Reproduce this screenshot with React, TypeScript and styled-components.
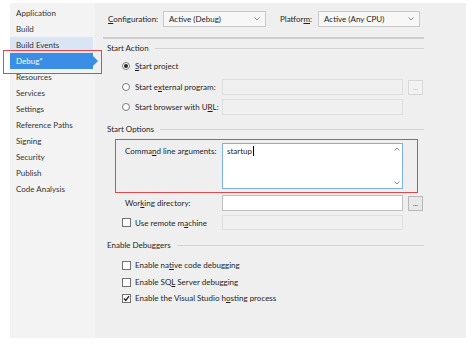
import React from 'react';
import styled, { createGlobalStyle } from 'styled-components';

const GlobalStyle = createGlobalStyle`
  html, body {
    margin: 0;
    padding: 0;
    background: #ffffff;
  }
  body {
    font-family: Lato, "Open Sans", Arial, sans-serif;
    font-size: 8px;
    color: #1e1e1e;
  }
`;

const Panel = styled.div`
  position: relative;
  display: flex;
  margin: 3px 0 0 10px;
  width: 456px;
  height: 335px;
  background: #efefef;
`;

const Sidebar = styled.nav`
  width: 85px;
  padding-top: 2px;
  background: #f3f3f3;
`;

const NavItem = styled.div<{ $state?: 'hover' | 'active' }>`
  position: relative;
  height: 16px;
  line-height: 16px;
  padding-left: 6px;
  margin-right: 2px;
  white-space: nowrap;
  color: ${p => (p.$state === 'active' ? '#ffffff' : '#333333')};
  background: ${p =>
    p.$state === 'active' ? '#3b8ee6' : p.$state === 'hover' ? '#d9e5f4' : 'transparent'};

  ${p =>
    p.$state === 'active' &&
    `
    &::after {
      content: '';
      position: absolute;
      right: -5px;
      top: 3px;
      border-left: 5px solid #3b8ee6;
      border-top: 5px solid transparent;
      border-bottom: 5px solid transparent;
    }
  `}
`;

const Highlight = styled.div`
  position: absolute;
  left: -7px;
  top: 47px;
  width: 97px;
  height: 22px;
  border: 1px solid #e0484c;
  pointer-events: none;
`;

const Main = styled.main`
  flex: 1;
  padding: 8px 0 0 8px;
`;

const Content = styled.div`
  width: 321px;
  display: flex;
  flex-direction: column;
`;

const TopRow = styled.div`
  display: flex;
  align-items: center;
  height: 16px;
  padding-left: 5px;
`;

const TopLabel = styled.span<{ $w: number }>`
  width: ${p => p.$w}px;
  white-space: nowrap;
`;

const Select = styled.div<{ $w: number; $gap?: number }>`
  box-sizing: border-box;
  display: flex;
  align-items: center;
  justify-content: space-between;
  width: ${p => p.$w}px;
  height: 16px;
  margin-right: ${p => p.$gap ?? 0}px;
  padding: 0 5px;
  white-space: nowrap;
  background: #f7f7f7;
  border: 1px solid #c9c9c9;
`;

const Separator = styled.div`
  margin-top: 10px;
  height: 2px;
  background: #cdcdcd;
`;

const Section = styled.div<{ $mt: number }>`
  display: flex;
  align-items: center;
  height: 12px;
  margin-top: ${p => p.$mt}px;
  padding-left: 4px;
  white-space: nowrap;

  &::after {
    content: '';
    flex: 1;
    height: 1px;
    margin-left: 6px;
    background: #d3d3d3;
  }
`;

const Row = styled.div<{ $mt: number; $h?: number; $indent?: number }>`
  display: flex;
  align-items: center;
  height: ${p => p.$h ?? 16}px;
  margin-top: ${p => p.$mt}px;
  padding-left: ${p => p.$indent ?? 19}px;
`;

const Label = styled.span<{ $w?: number; $pt?: number }>`
  display: block;
  width: ${p => (p.$w ? `${p.$w}px` : 'auto')};
  padding-top: ${p => p.$pt ?? 0}px;
  flex-shrink: 0;
  white-space: nowrap;
`;

const Radio = styled.span<{ $on?: boolean }>`
  position: relative;
  box-sizing: border-box;
  width: 8px;
  height: 8px;
  margin-right: 5px;
  border-radius: 50%;
  border: 1px solid #7a7a7a;
  background: #ffffff;

  ${p =>
    p.$on &&
    `
    &::after {
      content: '';
      position: absolute;
      left: 1px;
      top: 1px;
      width: 4px;
      height: 4px;
      border-radius: 50%;
      background: #262626;
    }
  `}
`;

const Check = styled.span`
  box-sizing: border-box;
  display: flex;
  align-items: center;
  justify-content: center;
  width: 9px;
  height: 9px;
  margin-right: 4px;
  border: 1px solid #707070;
  background: #ffffff;
`;

const Input = styled.div<{ $disabled?: boolean; $h?: number }>`
  box-sizing: border-box;
  width: 181px;
  height: ${p => p.$h ?? 16}px;
  background: ${p => (p.$disabled ? '#f0f0f0' : '#ffffff')};
  border: 1px solid ${p => (p.$disabled ? '#dedede' : '#bfbfbf')};
`;

const Browse = styled.div<{ $disabled?: boolean }>`
  box-sizing: border-box;
  display: flex;
  align-items: center;
  justify-content: center;
  width: 15px;
  height: 15px;
  margin-left: 5px;
  line-height: 1;
  color: ${p => (p.$disabled ? '#b0b0b0' : '#333333')};
  background: ${p => (p.$disabled ? '#f2f2f2' : '#e9e9e9')};
  border: 1px solid ${p => (p.$disabled ? '#d8d8d8' : '#b8b8b8')};
  font-size: 7px;
`;

const CommandBox = styled.div`
  box-sizing: border-box;
  display: flex;
  align-items: flex-start;
  margin: 4px 0 0 12px;
  width: 303px;
  height: 54px;
  padding: 3px 0 0 9px;
  border: 1px solid #e0484c;
`;

const TextArea = styled.div`
  position: relative;
  box-sizing: border-box;
  width: 181px;
  height: 46px;
  padding: 2px 4px;
  background: #ffffff;
  border: 1px solid #7fb1e6;
`;

const Caret = styled.span`
  display: inline-block;
  width: 1px;
  height: 10px;
  margin-left: 1px;
  vertical-align: -2px;
  background: #000000;
`;

const ScrollArrows = styled.div`
  position: absolute;
  right: 2px;
  top: 3px;
  bottom: 3px;
  display: flex;
  flex-direction: column;
  justify-content: space-between;
`;

const U = styled.span`
  text-decoration: underline;
`;

const Chevron = ({ up }: { up?: boolean }) => (
  <svg width="6" height="4" viewBox="0 0 6 4">
    <path
      d={up ? 'M0.5 3.5 L3 1 L5.5 3.5' : 'M0.5 0.5 L3 3 L5.5 0.5'}
      fill="none"
      stroke="#8a8a8a"
      strokeWidth="1"
    />
  </svg>
);

const Tick = () => (
  <svg width="7" height="7" viewBox="0 0 7 7">
    <path d="M1 3.5 L2.8 5.5 L6 1.2" fill="none" stroke="#222" strokeWidth="1.4" />
  </svg>
);

const navItems = [
  'Application',
  'Build',
  'Build Events',
  'Debug*',
  'Resources',
  'Services',
  'Settings',
  'Reference Paths',
  'Signing',
  'Security',
  'Publish',
  'Code Analysis',
];

export default function App() {
  return (
    <>
      <GlobalStyle />
      <Panel>
        <Sidebar>
          {navItems.map(item => (
            <NavItem
              key={item}
              $state={item === 'Build Events' ? 'hover' : item === 'Debug*' ? 'active' : undefined}
            >
              {item}
            </NavItem>
          ))}
        </Sidebar>
        <Highlight />
        <Main>
          <Content>
            <TopRow>
              <TopLabel $w={55}>
                <U>C</U>onfiguration:
              </TopLabel>
              <Select $w={103} $gap={14}>
                Active (Debug)
                <Chevron />
              </Select>
              <TopLabel $w={38}>
                Platfor<U>m</U>:
              </TopLabel>
              <Select $w={102}>
                Active (Any CPU)
                <Chevron />
              </Select>
            </TopRow>

            <Separator />

            <Section $mt={3}>Start Action</Section>

            <Row $mt={4}>
              <Radio $on />
              <Label>
                <U>S</U>tart project
              </Label>
            </Row>
            <Row $mt={5}>
              <Radio />
              <Label $w={87}>
                Start e<U>x</U>ternal program:
              </Label>
              <Input $disabled />
              <Browse $disabled>...</Browse>
            </Row>
            <Row $mt={4}>
              <Radio />
              <Label $w={87}>
                Start browser with U<U>R</U>L:
              </Label>
              <Input $disabled />
            </Row>

            <Section $mt={8}>Start Options</Section>

            <CommandBox>
              <Label $w={97} $pt={3}>
                Comma<U>n</U>d line arguments:
              </Label>
              <TextArea>
                startup
                <Caret />
                <ScrollArrows>
                  <Chevron up />
                  <Chevron />
                </ScrollArrows>
              </TextArea>
            </CommandBox>

            <Row $mt={2} $indent={22}>
              <Label $w={97}>
                Wor<U>k</U>ing directory:
              </Label>
              <Input />
              <Browse>...</Browse>
            </Row>
            <Row $mt={4} $h={15}>
              <Check />
              <Label $w={87}>
                Use remote m<U>a</U>chine
              </Label>
              <Input $disabled $h={15} />
            </Row>

            <Section $mt={9}>Enable Debuggers</Section>

            <Row $mt={7} $h={14}>
              <Check />
              <Label>
                Enable na<U>t</U>ive code debugging
              </Label>
            </Row>
            <Row $mt={3} $h={14}>
              <Check />
              <Label>
                Enable SQ<U>L</U> Server debugging
              </Label>
            </Row>
            <Row $mt={2} $h={14}>
              <Check>
                <Tick />
              </Check>
              <Label>
                Enable the Visual Studio h<U>o</U>sting process
              </Label>
            </Row>
          </Content>
        </Main>
      </Panel>
    </>
  );
}
